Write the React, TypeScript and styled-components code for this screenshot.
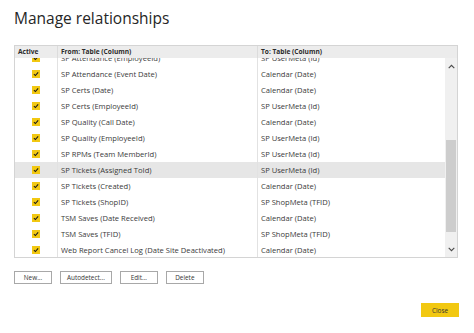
import styled, { createGlobalStyle } from 'styled-components';

const GlobalStyle = createGlobalStyle`
  html, body {
    margin: 0;
    padding: 0;
    background: #ffffff;
  }
  body {
    font-family: "Open Sans", "Noto Sans", sans-serif;
    color: #333333;
  }
`;

const Dialog = styled.div`
  width: 474px;
  height: 333px;
  box-sizing: border-box;
  padding: 8px 15px 0 14px;
  display: flex;
  flex-direction: column;
`;

const Title = styled.h1`
  margin: 0;
  font-size: 15.5px;
  font-weight: 400;
  line-height: 20px;
  color: #262626;
`;

const TableBox = styled.div`
  margin-top: 17px;
  width: 444px;
  height: 213px;
  box-sizing: border-box;
  border: 1px solid #d4d4d4;
  display: flex;
  flex-direction: column;
  overflow: hidden;
`;

const HeaderRow = styled.div`
  display: grid;
  grid-template-columns: 43px 200px 1fr;
  height: 12px;
  background: #ececec;
  flex: none;
`;

const HeaderCell = styled.div<{ $last?: boolean }>`
  font-size: 6.6px;
  font-weight: 700;
  line-height: 12px;
  padding-left: 3px;
  color: #2b2b2b;
  border-right: ${p => (p.$last ? 'none' : '1px solid #dcdcdc')};
  white-space: nowrap;
`;

const Body = styled.div`
  flex: 1;
  display: flex;
  min-height: 0;
`;

const List = styled.div`
  flex: 1;
  overflow: hidden;
`;

const Rows = styled.div`
  margin-top: -8px;
`;

const Row = styled.div<{ $selected?: boolean }>`
  display: grid;
  grid-template-columns: 43px 200px 1fr;
  height: 16px;
  background: ${p => (p.$selected ? '#e6e6e6' : 'transparent')};
`;

const Cell = styled.div<{ $last?: boolean }>`
  font-size: 7.6px;
  line-height: 16px;
  padding-left: 3px;
  color: #3a3a3a;
  border-right: ${p => (p.$last ? 'none' : '1px solid #e2e2e2')};
  white-space: nowrap;
  overflow: hidden;
`;

const CheckCell = styled.div`
  display: flex;
  align-items: center;
  justify-content: center;
  border-right: 1px solid #e2e2e2;
`;

const Check = styled.div`
  width: 8px;
  height: 8px;
  background: #f2c811;
  display: flex;
  align-items: center;
  justify-content: center;
`;

const ScrollBar = styled.div`
  width: 12px;
  flex: none;
  background: #f0f0f0;
  display: flex;
  flex-direction: column;
  align-items: center;
`;

const Arrow = styled.div`
  height: 16px;
  display: flex;
  align-items: center;
  justify-content: center;
  flex: none;
`;

const Track = styled.div`
  flex: 1;
  width: 10px;
  display: flex;
  flex-direction: column;
`;

const Thumb = styled.div<{ $top: number; $size: number }>`
  margin-top: ${p => p.$top}px;
  height: ${p => p.$size}px;
  background: #cdcdcd;
`;

const ButtonRow = styled.div`
  display: flex;
  gap: 8px;
  margin-top: 13px;
`;

const Button = styled.button<{ $primary?: boolean }>`
  height: 13px;
  min-width: 38px;
  padding: 0 6px;
  box-sizing: border-box;
  font-family: inherit;
  font-size: 6.4px;
  line-height: 11px;
  color: #333333;
  background: ${p => (p.$primary ? '#f2c811' : '#ffffff')};
  border: ${p => (p.$primary ? '1px solid #f2c811' : '1px solid #a8a8a8')};
  border-radius: 0;
  cursor: pointer;
`;

const Footer = styled.div`
  display: flex;
  justify-content: flex-end;
  margin-top: 19px;
`;

const CloseButton = styled(Button)`
  width: 38px;
  height: 14px;
`;

const relationships = [
  { from: 'SP Attendance (EmployeeId)', to: 'SP UserMeta (Id)' },
  { from: 'SP Attendance (Event Date)', to: 'Calendar (Date)' },
  { from: 'SP Certs (Date)', to: 'Calendar (Date)' },
  { from: 'SP Certs (EmployeeId)', to: 'SP UserMeta (Id)' },
  { from: 'SP Quality (Call Date)', to: 'Calendar (Date)' },
  { from: 'SP Quality (EmployeeId)', to: 'SP UserMeta (Id)' },
  { from: 'SP RPMs (Team MemberId)', to: 'SP UserMeta (Id)' },
  { from: 'SP Tickets (Assigned ToId)', to: 'SP UserMeta (Id)', selected: true },
  { from: 'SP Tickets (Created)', to: 'Calendar (Date)' },
  { from: 'SP Tickets (ShopID)', to: 'SP ShopMeta (TFID)' },
  { from: 'TSM Saves (Date Received)', to: 'Calendar (Date)' },
  { from: 'TSM Saves (TFID)', to: 'SP ShopMeta (TFID)' },
  { from: 'Web Report Cancel Log (Date Site Deactivated)', to: 'Calendar (Date)' },
];

const Tick = () => (
  <svg width="6" height="6" viewBox="0 0 10 10">
    <path d="M1.5 5.2 L4 7.6 L8.6 2.4" fill="none" stroke="#1a1a1a" strokeWidth="1.8" />
  </svg>
);

const Chevron = ({ up }: { up?: boolean }) => (
  <svg width="7" height="5" viewBox="0 0 10 6">
    <path
      d={up ? 'M1 5.2 L5 1.2 L9 5.2' : 'M1 0.8 L5 4.8 L9 0.8'}
      fill="none"
      stroke="#4a4a4a"
      strokeWidth="1.6"
    />
  </svg>
);

const App = () => {
  return (
    <>
      <GlobalStyle />
      <Dialog>
        <Title>Manage relationships</Title>
        <TableBox>
          <HeaderRow>
            <HeaderCell>Active</HeaderCell>
            <HeaderCell>From: Table (Column)</HeaderCell>
            <HeaderCell $last>To: Table (Column)</HeaderCell>
          </HeaderRow>
          <Body>
            <List>
              <Rows>
                {relationships.map(r => (
                  <Row key={r.from} $selected={r.selected}>
                    <CheckCell>
                      <Check>
                        <Tick />
                      </Check>
                    </CheckCell>
                    <Cell>{r.from}</Cell>
                    <Cell $last>{r.to}</Cell>
                  </Row>
                ))}
              </Rows>
            </List>
            <ScrollBar>
              <Arrow>
                <Chevron up />
              </Arrow>
              <Track>
                <Thumb $top={66} $size={92} />
              </Track>
              <Arrow>
                <Chevron />
              </Arrow>
            </ScrollBar>
          </Body>
        </TableBox>
        <ButtonRow>
          <Button>New...</Button>
          <Button>Autodetect...</Button>
          <Button>Edit...</Button>
          <Button>Delete</Button>
        </ButtonRow>
        <Footer>
          <CloseButton $primary>Close</CloseButton>
        </Footer>
      </Dialog>
    </>
  );
};

export default App;
